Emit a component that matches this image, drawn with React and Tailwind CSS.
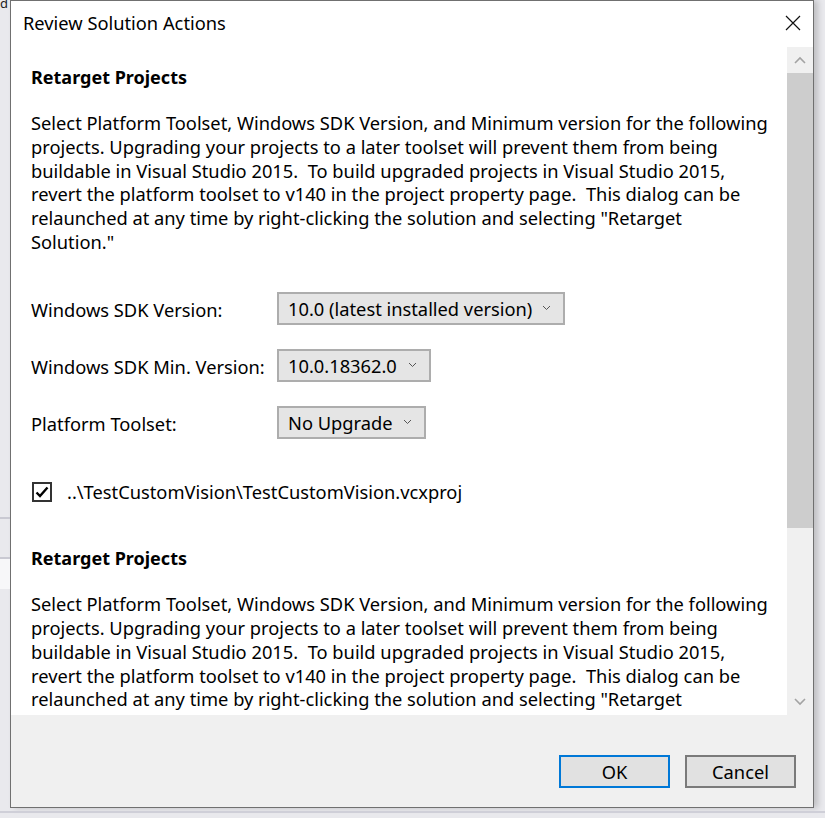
import React, { useState } from "react";

const para = [
  "Select Platform Toolset, Windows SDK Version, and Minimum version for the following",
  "projects. Upgrading your projects to a later toolset will prevent them from being",
  "buildable in Visual Studio 2015.  To build upgraded projects in Visual Studio 2015,",
  "revert the platform toolset to v140 in the project property page.  This dialog can be",
  'relaunched at any time by right-clicking the solution and selecting "Retarget',
  'Solution."',
];

const Chevron = () => (
  <svg width="9" height="6" viewBox="0 0 9 6" className="ml-auto">
    <path d="M1 1 L4.5 4.5 L8 1" fill="none" stroke="#555" strokeWidth="1" />
  </svg>
);

const Select = ({ value, width }) => (
  <div
    className={`flex items-center h-[33px] ${width} border-2 border-[#adadad] bg-[#e5e5e5] pl-[9px] pr-[12px] text-[18.3px] text-black`}
  >
    <span>{value}</span>
    <Chevron />
  </div>
);

const Row = ({ label, children }) => (
  <div className="flex items-center">
    <div className="w-[246px] text-[18.3px] pt-[3px]">{label}</div>
    {children}
  </div>
);

const Section = ({ children }) => (
  <div>
    <div className="text-[18px] font-bold leading-[24px]">Retarget Projects</div>
    <div className="mt-[22px] text-[18.3px] leading-[23.8px] whitespace-pre">
      {para.map((l) => (
        <div key={l}>{l}</div>
      ))}
    </div>
    {children}
  </div>
);

export default function App() {
  const [checked, setChecked] = useState(true);
  return (
    <div
      className="relative w-[825px] h-[818px] overflow-hidden bg-[#e9e9ed] flex"
      style={{ fontFamily: '"Noto Sans", "Open Sans", sans-serif' }}
    >
      <div className="absolute left-0 top-[-6px] text-[13px] text-[#222]">d</div>
      <div className="absolute left-0 top-[517px] w-[10px] h-[2px] bg-[#c9c9d2]"></div>
      <div className="absolute left-0 top-[557px] w-[10px] h-[2px] bg-[#c9c9d2]"></div>
      <div className="absolute left-0 top-[559px] w-[10px] h-[30px] bg-[#f7f7f9]"></div>
      <div className="absolute left-0 top-[811px] w-[825px] h-[2px] bg-[#cfcfd8]"></div>

      <div className="ml-[10px] w-[804px] h-[808px] border border-[#707070] bg-white flex flex-col shadow-[4px_0_6px_rgba(0,0,0,0.18)]">
        {/* title bar */}
        <div className="h-[46px] flex items-center pl-[12px] pr-[12px] pb-[3px] shrink-0">
          <div className="text-[18.3px] text-black">Review Solution Actions</div>
          <svg width="16" height="16" viewBox="0 0 16 16" className="ml-auto">
            <path d="M1 1 L15 15 M15 1 L1 15" stroke="#111" strokeWidth="1.2" />
          </svg>
        </div>

        {/* scroll area */}
        <div className="flex h-[668px] shrink-0 overflow-hidden">
          <div className="flex-1 overflow-hidden pl-[20px] pt-[18px] text-black">
            <Section>
              <div className="mt-[38px] flex flex-col gap-[24px]">
                <Row label="Windows SDK Version:">
                  <Select value="10.0 (latest installed version)" width="w-[288px]" />
                </Row>
                <Row label="Windows SDK Min. Version:">
                  <Select value="10.0.18362.0" width="w-[154px]" />
                </Row>
                <Row label="Platform Toolset:">
                  <Select value="No Upgrade" width="w-[149px]" />
                </Row>
              </div>
              <div
                className="mt-[39px] flex items-center cursor-default"
                onClick={() => setChecked(!checked)}
              >
                <div className="w-[20px] h-[20px] border-2 border-[#333] bg-white flex items-center justify-center ml-[1px]">
                  {checked && (
                    <svg width="14" height="12" viewBox="0 0 14 12">
                      <path d="M1.5 6.5 L5 10 L12.5 1.5" fill="none" stroke="#000" strokeWidth="2.4" />
                    </svg>
                  )}
                </div>
                <div className="ml-[15px] text-[18.3px]">..\TestCustomVision\TestCustomVision.vcxproj</div>
              </div>
            </Section>
            <div className="mt-[41px]">
              <Section />
            </div>
          </div>

          {/* scrollbar */}
          <div className="w-[26px] bg-[#f0f0f0] flex flex-col">
            <div className="h-[26px] flex items-center justify-center">
              <svg width="12" height="8" viewBox="0 0 12 8">
                <path d="M1 7 L6 2 L11 7" fill="none" stroke="#a3a3a3" strokeWidth="1.6" />
              </svg>
            </div>
            <div className="h-[455px] bg-[#cdcdcd]"></div>
            <div className="flex-1"></div>
            <div className="h-[26px] flex items-center justify-center">
              <svg width="12" height="8" viewBox="0 0 12 8">
                <path d="M1 1 L6 6 L11 1" fill="none" stroke="#a3a3a3" strokeWidth="1.6" />
              </svg>
            </div>
          </div>
        </div>

        {/* footer */}
        <div className="flex-1 bg-[#f0f0f0] flex items-start justify-end pt-[40px] pr-[17px] gap-[15px]">
          <button className="w-[111px] h-[33px] border-2 border-[#0078d7] bg-[#e1e1e1] text-[18.3px] text-black">
            OK
          </button>
          <button className="w-[111px] h-[33px] border-2 border-[#7a7a7a] bg-[#e1e1e1] text-[18.3px] text-black">
            Cancel
          </button>
        </div>
      </div>
    </div>
  );
}
